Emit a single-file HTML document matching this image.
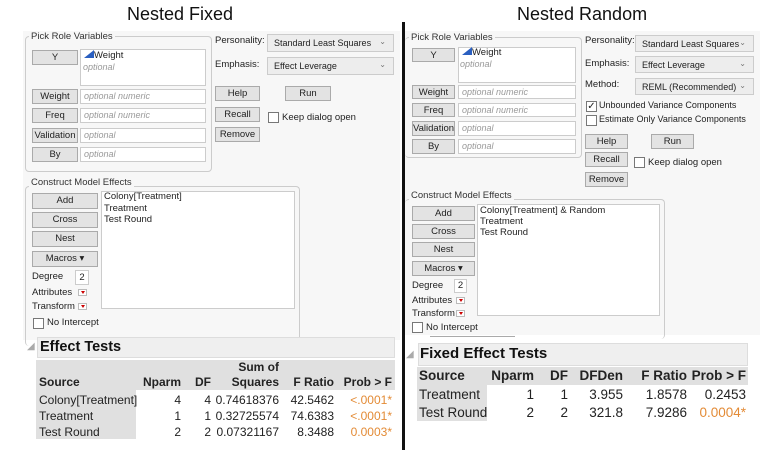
<!DOCTYPE html>
<html><head><style>
*{margin:0;padding:0;box-sizing:border-box}
body{width:760px;height:450px;background:#fff;position:relative;overflow:hidden;font-family:"Liberation Sans",sans-serif;font-size:9.5px;color:#222}
div,span{position:absolute}
.t{white-space:nowrap}
.bg{background:#f7f7f7}
.fr{border:1px solid #ccc;border-radius:4px}
.lg{background:#f7f7f7;padding:0 2px;font-size:9.5px;color:#333}
.b{background:#e3e3e3;border:1px solid #aaa;text-align:center;font-size:9.5px;line-height:13px;color:#222}
.in{background:#fff;border:1px solid #ccc;font-style:italic;color:#999;font-size:9px;padding-left:3px;line-height:13px}
.sel{background:#ededed;border:1px solid #ccc;font-size:9px;padding-left:6px;line-height:17px;color:#222}
.sel:after{content:"\2304";position:absolute;right:7px;top:-2px;font-size:8px;color:#777}
.cb{width:11px;height:11px;background:#fff;border:1px solid #777}
.lb{background:#fff;border:1px solid #ccc}
.dd{width:9px;height:7px;background:#fff;border:1px solid #bbb}
.dd:after{content:"";position:absolute;left:2px;top:1px;border:2px solid transparent;border-top:3px solid #c00}
.hd{background:#e0e0e0}
.tbl{font-size:12px}
.r{text-align:right}
.o{color:#e38b36}
</style></head><body>
<div class="t" style="left:127px;top:4px;font-size:18px;color:#111">Nested Fixed</div>
<div class="t" style="left:517px;top:4px;font-size:18px;color:#111">Nested Random</div>
<div style="left:402px;top:22px;width:3px;height:428px;background:#111"></div>

<!-- LEFT -->
<div class="bg" style="left:23px;top:31px;width:377px;height:309px"></div>
<div class="fr" style="left:25px;top:36px;width:187px;height:136px"></div>
<div class="lg t" style="left:29px;top:31px">Pick Role Variables</div>
<div class="b" style="left:32px;top:50px;width:46px;height:15px">Y</div>
<div class="lb" style="left:80px;top:49px;width:126px;height:37px"></div>
<div class="t" style="left:84px;top:50px"><span style="position:relative;display:inline-block;width:0;height:0;border-left:10px solid transparent;border-bottom:8px solid #2a5fc0"></span>Weight</div>
<div class="t" style="left:83px;top:62px;font-style:italic;color:#999;font-size:9px">optional</div>
<div class="b" style="left:32px;top:89px;width:46px;height:15px">Weight</div>
<div class="in" style="left:80px;top:89px;width:126px;height:15px">optional numeric</div>
<div class="b" style="left:32px;top:108px;width:46px;height:15px">Freq</div>
<div class="in" style="left:80px;top:108px;width:126px;height:15px">optional numeric</div>
<div class="b" style="left:32px;top:128px;width:46px;height:15px">Validation</div>
<div class="in" style="left:80px;top:128px;width:126px;height:15px">optional</div>
<div class="b" style="left:32px;top:147px;width:46px;height:15px">By</div>
<div class="in" style="left:80px;top:147px;width:126px;height:15px">optional</div>

<div class="t" style="left:215px;top:35px">Personality:</div>
<div class="sel" style="left:267px;top:34px;width:127px;height:18px">Standard Least Squares</div>
<div class="t" style="left:215px;top:59px">Emphasis:</div>
<div class="sel" style="left:267px;top:57px;width:127px;height:18px">Effect Leverage</div>
<div class="b" style="left:215px;top:86px;width:45px;height:15px">Help</div>
<div class="b" style="left:285px;top:86px;width:46px;height:15px">Run</div>
<div class="b" style="left:215px;top:107px;width:45px;height:15px">Recall</div>
<div class="cb" style="left:268px;top:112px"></div>
<div class="t" style="left:282px;top:112px">Keep dialog open</div>
<div class="b" style="left:215px;top:127px;width:45px;height:15px">Remove</div>

<div class="fr" style="left:25px;top:186px;width:275px;height:160px;border-bottom:none"></div>
<div class="lg t" style="left:29px;top:177px">Construct Model Effects</div>
<div class="b" style="left:32px;top:193px;width:66px;height:16px">Add</div>
<div class="b" style="left:32px;top:212px;width:66px;height:16px">Cross</div>
<div class="b" style="left:32px;top:231px;width:66px;height:16px">Nest</div>
<div class="b" style="left:32px;top:251px;width:66px;height:16px">Macros &#9662;</div>
<div class="lb" style="left:101px;top:191px;width:194px;height:118px"></div>
<div class="t" style="left:104px;top:191px;line-height:11.5px">Colony[Treatment]<br>Treatment<br>Test Round</div>
<div class="t" style="left:32px;top:271px">Degree</div>
<div class="lb" style="left:75px;top:270px;width:14px;height:15px;text-align:center;line-height:13px">2</div>
<div class="t" style="left:32px;top:287px">Attributes</div>
<div class="dd" style="left:78px;top:289px"></div>
<div class="t" style="left:32px;top:301px">Transform</div>
<div class="dd" style="left:78px;top:303px"></div>
<div class="cb" style="left:33px;top:318px"></div>
<div class="t" style="left:47px;top:317px">No Intercept</div>

<div class="t" style="left:27px;top:341px;color:#aaa;font-size:10px">&#9698;</div>
<div style="left:37px;top:337px;width:358px;height:21px;background:#efefef;border:1px solid #ddd"></div>
<div class="t" style="left:40px;top:339px;font-size:14.5px;font-weight:bold;color:#111">Effect Tests</div>
<div class="hd" style="left:36px;top:360px;width:359px;height:30px"></div>
<div class="hd" style="left:36px;top:390px;width:100px;height:49px"></div>
<div class="tbl">
<div class="t" style="left:39px;top:375px;font-weight:bold">Source</div>
<div class="t r" style="left:137px;width:44px;top:375px;font-weight:bold">Nparm</div>
<div class="t r" style="left:186px;width:25px;top:375px;font-weight:bold">DF</div>
<div class="t r" style="left:215px;width:64px;top:360px;font-weight:bold;line-height:15px">Sum of<br>Squares</div>
<div class="t r" style="left:283px;width:51px;top:375px;font-weight:bold">F Ratio</div>
<div class="t r" style="left:338px;width:54px;top:375px;font-weight:bold">Prob &gt; F</div>
<div class="t" style="left:39px;top:392px;line-height:16px">Colony[Treatment]<br>Treatment<br>Test Round</div>
<div class="t r" style="left:137px;width:44px;top:392px;line-height:16px">4<br>1<br>2</div>
<div class="t r" style="left:186px;width:25px;top:392px;line-height:16px">4<br>1<br>2</div>
<div class="t r" style="left:215px;width:64px;top:392px;line-height:16px">0.74618376<br>0.32725574<br>0.07321167</div>
<div class="t r" style="left:283px;width:51px;top:392px;line-height:16px">42.5462<br>74.6383<br>8.3488</div>
<div class="t r o" style="left:338px;width:54px;top:392px;line-height:16px">&lt;.0001*<br>&lt;.0001*<br>0.0003*</div>
</div>

<!-- RIGHT -->
<div class="bg" style="left:405px;top:31px;width:355px;height:304px"></div>
<div class="fr" style="left:405px;top:37px;width:177px;height:121px;border-left:none"></div>
<div class="lg t" style="left:409px;top:32px">Pick Role Variables</div>
<div class="b" style="left:412px;top:48px;width:43px;height:14px">Y</div>
<div class="lb" style="left:458px;top:47px;width:118px;height:36px"></div>
<div class="t" style="left:462px;top:47px"><span style="position:relative;display:inline-block;width:0;height:0;border-left:10px solid transparent;border-bottom:8px solid #2a5fc0"></span>Weight</div>
<div class="t" style="left:460px;top:59px;font-style:italic;color:#999;font-size:9px">optional</div>
<div class="b" style="left:412px;top:85px;width:43px;height:14px">Weight</div>
<div class="in" style="left:458px;top:85px;width:118px;height:14px">optional numeric</div>
<div class="b" style="left:412px;top:103px;width:43px;height:14px">Freq</div>
<div class="in" style="left:458px;top:103px;width:118px;height:14px">optional numeric</div>
<div class="b" style="left:412px;top:121px;width:43px;height:15px">Validation</div>
<div class="in" style="left:458px;top:121px;width:118px;height:15px">optional</div>
<div class="b" style="left:412px;top:139px;width:43px;height:15px">By</div>
<div class="in" style="left:458px;top:139px;width:118px;height:15px">optional</div>

<div class="t" style="left:585px;top:35px">Personality:</div>
<div class="sel" style="left:635px;top:35px;width:119px;height:17px">Standard Least Squares</div>
<div class="t" style="left:585px;top:58px">Emphasis:</div>
<div class="sel" style="left:635px;top:56px;width:119px;height:17px">Effect Leverage</div>
<div class="t" style="left:585px;top:79px">Method:</div>
<div class="sel" style="left:635px;top:78px;width:119px;height:17px">REML (Recommended)</div>
<div class="cb" style="left:586px;top:101px;font-size:10px;line-height:9px;text-align:center">&#10003;</div>
<div class="t" style="left:599px;top:100px;font-size:9px">Unbounded Variance Components</div>
<div class="cb" style="left:586px;top:115px"></div>
<div class="t" style="left:599px;top:114px;font-size:9px">Estimate Only Variance Components</div>
<div class="b" style="left:585px;top:134px;width:43px;height:15px">Help</div>
<div class="b" style="left:651px;top:134px;width:43px;height:15px">Run</div>
<div class="b" style="left:585px;top:152px;width:43px;height:15px">Recall</div>
<div class="cb" style="left:634px;top:157px"></div>
<div class="t" style="left:648px;top:157px">Keep dialog open</div>
<div class="b" style="left:585px;top:172px;width:43px;height:15px">Remove</div>

<div class="fr" style="left:405px;top:199px;width:260px;height:140px;border-left:none;border-bottom:none"></div>
<div class="lg t" style="left:409px;top:190px">Construct Model Effects</div>
<div class="b" style="left:412px;top:206px;width:63px;height:15px">Add</div>
<div class="b" style="left:412px;top:224px;width:63px;height:15px">Cross</div>
<div class="b" style="left:412px;top:242px;width:63px;height:15px">Nest</div>
<div class="b" style="left:412px;top:261px;width:63px;height:15px">Macros &#9662;</div>
<div class="lb" style="left:477px;top:204px;width:183px;height:112px"></div>
<div class="t" style="left:480px;top:205px;line-height:11px">Colony[Treatment] &amp; Random<br>Treatment<br>Test Round</div>
<div class="t" style="left:412px;top:280px">Degree</div>
<div class="lb" style="left:454px;top:279px;width:13px;height:14px;text-align:center;line-height:12px">2</div>
<div class="t" style="left:412px;top:295px">Attributes</div>
<div class="dd" style="left:456px;top:297px"></div>
<div class="t" style="left:412px;top:308px">Transform</div>
<div class="dd" style="left:456px;top:310px"></div>
<div class="cb" style="left:412px;top:322px"></div>
<div class="t" style="left:426px;top:322px">No Intercept</div>
<div style="left:430px;top:336px;width:85px;height:1px;background:#aaa"></div>

<div class="t" style="left:406px;top:349px;color:#aaa;font-size:10px">&#9698;</div>
<div style="left:418px;top:343px;width:330px;height:23px;background:#efefef;border:1px solid #ddd"></div>
<div class="t" style="left:420px;top:345px;font-size:15px;font-weight:bold;color:#111">Fixed Effect Tests</div>
<div class="hd" style="left:417px;top:367px;width:331px;height:18px"></div>
<div class="hd" style="left:417px;top:385px;width:70px;height:36px"></div>
<div style="font-size:13.5px">
<div class="t" style="left:419px;top:368px;font-weight:bold">Source</div>
<div class="t r" style="left:488px;width:46px;top:368px;font-weight:bold">Nparm</div>
<div class="t r" style="left:537px;width:31px;top:368px;font-weight:bold">DF</div>
<div class="t r" style="left:571px;width:52px;top:368px;font-weight:bold">DFDen</div>
<div class="t r" style="left:627px;width:60px;top:368px;font-weight:bold">F Ratio</div>
<div class="t r" style="left:691px;width:55px;top:368px;font-weight:bold">Prob &gt; F</div>
<div class="t" style="left:419px;top:386px;line-height:18px">Treatment<br>Test Round</div>
<div class="t r" style="left:488px;width:46px;top:386px;line-height:18px">1<br>2</div>
<div class="t r" style="left:537px;width:31px;top:386px;line-height:18px">1<br>2</div>
<div class="t r" style="left:571px;width:52px;top:386px;line-height:18px">3.955<br>321.8</div>
<div class="t r" style="left:627px;width:60px;top:386px;line-height:18px">1.8578<br>7.9286</div>
<div class="t r" style="left:691px;width:55px;top:386px;line-height:18px">0.2453<br><span class="o" style="position:static">0.0004*</span></div>
</div>
</body></html>
